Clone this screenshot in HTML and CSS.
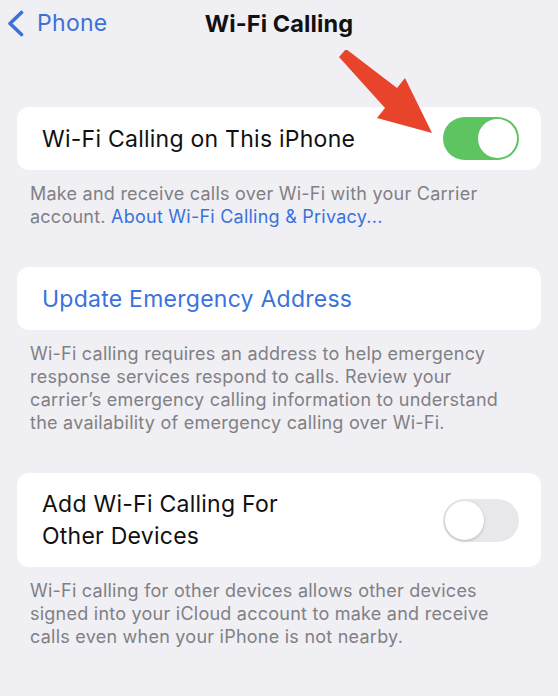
FILE: index.html
```html
<!DOCTYPE html>
<html lang="en">
<head>
    <meta charset="UTF-8">
    <meta name="viewport" content="width=device-width, initial-scale=1.0">
    <title>Wi-Fi Calling</title>
    <link rel="stylesheet" href="styles.css">
</head>
<body>
    <div class="screen">
        <div class="navbar">
            <a class="back" href="#">
                <svg class="chevron" width="17" height="27" viewBox="0 0 17 27">
                    <path d="M14.5 2.5 L3 13.5 L14.5 24.5" fill="none" stroke="currentColor" stroke-width="3.6" stroke-linecap="round" stroke-linejoin="round"/>
                </svg>
                <span>Phone</span>
            </a>
            <div class="title">Wi-Fi Calling</div>
            <div></div>
        </div>

        <div class="group first">
            <div class="card row">
                <span class="label">Wi-Fi Calling on This iPhone</span>
                <div class="switch on"><div class="knob"></div></div>
            </div>
            <p class="note">Make and receive calls over Wi-Fi with your Carrier account. <a href="#">About Wi-Fi Calling &amp; Privacy...</a></p>
        </div>

        <div class="group">
            <div class="card row">
                <a class="label link" href="#">Update Emergency Address</a>
            </div>
            <p class="note">Wi-Fi calling requires an address to help emergency response services respond to calls. Review your carrier’s emergency calling information to understand the availability of emergency calling over Wi-Fi.</p>
        </div>

        <div class="group">
            <div class="card row tall">
                <span class="label">Add Wi-Fi Calling For<br>Other Devices</span>
                <div class="switch"><div class="knob"></div></div>
            </div>
            <p class="note">Wi-Fi calling for other devices allows other devices signed into your iCloud account to make and receive calls even when your iPhone is not nearby.</p>
        </div>

        <!-- red pointer drawn over the first switch -->
        <svg class="pointer" width="110" height="90" viewBox="0 0 110 90">
            <path d="M9 7 L16 -1 L67 38 L75 28 L102 83 L47 68 L55 58 Z" fill="#e8432b"/>
        </svg>
    </div>
</body>
</html>
```

FILE: styles.css
```css
body {
    margin: 0;
    background: #f0eff4;
    font-family: Inter, "Noto Sans", sans-serif;
    color: #111;
}
.screen {
    position: relative;
    width: 558px;
    height: 696px;
    overflow: hidden;
}
.navbar {
    display: grid;
    grid-template-columns: 1fr auto 1fr;
    align-items: center;
    padding: 3px 0 0;
    height: 40px;
}
.back {
    display: flex;
    align-items: center;
    gap: 13px;
    padding-left: 7px;
    color: #3a72dc;
    text-decoration: none;
    font-size: 23px;
    letter-spacing: 0.3px;
}
.chevron {
    display: block;
}
.title {
    font-size: 23.5px;
    font-weight: 700;
    letter-spacing: 0.1px;
}
.group {
    margin: 0 17px 39px;
}
.group.first {
    margin-top: 64px;
}
.card {
    background: #fff;
    border-radius: 12px;
}
.row {
    display: flex;
    align-items: center;
    justify-content: space-between;
    min-height: 63px;
    padding: 0 22px 0 25px;
}
.row.tall {
    min-height: 94px;
}
.label {
    font-size: 23px;
    line-height: 32px;
    letter-spacing: 0.25px;
}
.link {
    color: #3a72dc;
    text-decoration: none;
}
.note {
    margin: 12px 0 0;
    padding: 0 36px 0 13px;
    font-size: 18px;
    line-height: 23px;
    letter-spacing: 0.24px;
    color: #808085;
}
.note a {
    color: #3a72dc;
    text-decoration: none;
}
.switch {
    position: relative;
    width: 76px;
    height: 43px;
    border-radius: 22px;
    background: #e8e8ea;
    flex-shrink: 0;
}
.switch .knob {
    position: absolute;
    top: 2px;
    left: 2px;
    width: 39px;
    height: 39px;
    border-radius: 50%;
    background: #fff;
    box-shadow: 0 1px 3px rgba(0, 0, 0, 0.22);
}
.switch.on {
    background: #5ec462;
}
.switch.on .knob {
    left: auto;
    right: 2px;
    box-shadow: none;
}
.pointer {
    position: absolute;
    left: 330px;
    top: 50px;
}
```
